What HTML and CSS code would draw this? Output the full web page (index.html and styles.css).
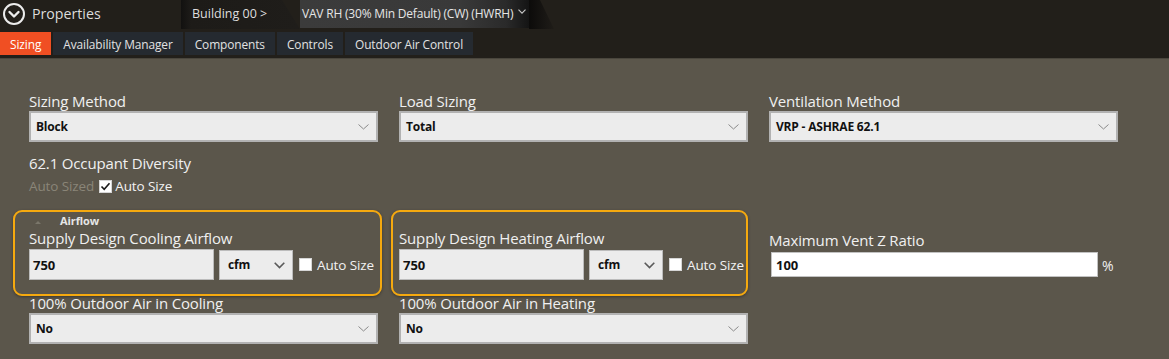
FILE: index.html
```html
<!DOCTYPE html>
<html lang="en">
<head>
<meta charset="utf-8">
<title>Properties</title>
<link rel="stylesheet" href="styles.css">
</head>
<body>
<div class="app">
  <header class="topbar">
    <div class="title">
      <svg class="title-icon" width="22" height="22" viewBox="0 0 22 22">
        <circle cx="11" cy="11" r="10" fill="none" stroke="#ececec" stroke-width="2"/>
        <path d="M6.5 9 L11 13.5 L15.5 9" fill="none" stroke="#ececec" stroke-width="2.4" stroke-linecap="round" stroke-linejoin="round"/>
      </svg>
      <span class="title-text">Properties</span>
    </div>
    <div class="crumb crumb-building">Building 00 &gt;</div>
    <div class="crumb crumb-item">
      <span class="crumb-text">VAV RH (30% Min Default) (CW) (HWRH)</span>
      <svg class="crumb-chevron" width="8" height="5" viewBox="0 0 8 5"><path d="M0.5 0.6 L4 4.2 L7.5 0.6" fill="none" stroke="#c8c8c8" stroke-width="1.1"/></svg>
    </div>
  </header>

  <nav class="tabs">
    <div class="tab tab-active">Sizing</div>
    <div class="tab">Availability Manager</div>
    <div class="tab">Components</div>
    <div class="tab">Controls</div>
    <div class="tab">Outdoor Air Control</div>
  </nav>

  <main class="content">
    <div class="row row-top">
      <div class="field">
        <div class="label">Sizing Method</div>
        <div class="select"><span class="value">Block</span><svg class="chev" width="11" height="6" viewBox="0 0 11 6"><path d="M0.5 0.5 L5.5 5 L10.5 0.5" fill="none" stroke="#8a8a8a" stroke-width="1"/></svg></div>
      </div>
      <div class="field">
        <div class="label">Load Sizing</div>
        <div class="select"><span class="value">Total</span><svg class="chev" width="11" height="6" viewBox="0 0 11 6"><path d="M0.5 0.5 L5.5 5 L10.5 0.5" fill="none" stroke="#8a8a8a" stroke-width="1"/></svg></div>
      </div>
      <div class="field">
        <div class="label">Ventilation Method</div>
        <div class="select"><span class="value">VRP - ASHRAE 62.1</span><svg class="chev" width="11" height="6" viewBox="0 0 11 6"><path d="M0.5 0.5 L5.5 5 L10.5 0.5" fill="none" stroke="#8a8a8a" stroke-width="1"/></svg></div>
      </div>
    </div>

    <div class="row row-diversity">
      <div class="field">
        <div class="label">62.1 Occupant Diversity</div>
        <div class="check-line">
          <span class="muted">Auto Sized</span>
          <span class="checkbox">
            <svg width="13" height="13" viewBox="0 0 13 13"><path d="M2.5 6.5 L5.2 9.3 L10.5 3.2" fill="none" stroke="#1a1a1a" stroke-width="1.6"/></svg>
          </span>
          <span class="check-text">Auto Size</span>
        </div>
      </div>
    </div>

    <div class="row row-airflow">
      <section class="group group-cooling">
        <div class="group-head"><span class="caret"></span><span class="group-title">Airflow</span></div>
        <div class="label">Supply Design Cooling Airflow</div>
        <div class="unit-line">
          <div class="input">750</div>
          <div class="select select-unit"><span class="value">cfm</span><svg class="chev" width="11" height="7" viewBox="0 0 11 7"><path d="M0.7 0.8 L5.5 5.6 L10.3 0.8" fill="none" stroke="#5a5a5a" stroke-width="1.6"/></svg></div>
          <span class="checkbox"></span>
          <span class="check-text">Auto Size</span>
        </div>
      </section>
      <section class="group group-heating">
        <div class="label">Supply Design Heating Airflow</div>
        <div class="unit-line">
          <div class="input">750</div>
          <div class="select select-unit"><span class="value">cfm</span><svg class="chev" width="11" height="7" viewBox="0 0 11 7"><path d="M0.7 0.8 L5.5 5.6 L10.3 0.8" fill="none" stroke="#5a5a5a" stroke-width="1.6"/></svg></div>
          <span class="checkbox"></span>
          <span class="check-text">Auto Size</span>
        </div>
      </section>
      <div class="field field-zratio">
        <div class="label">Maximum Vent Z Ratio</div>
        <div class="zratio-line">
          <div class="input input-white">100</div>
          <span class="percent">%</span>
        </div>
      </div>
    </div>

    <div class="row row-bottom">
      <div class="field">
        <div class="label">100% Outdoor Air in Cooling</div>
        <div class="select"><span class="value">No</span><svg class="chev" width="11" height="6" viewBox="0 0 11 6"><path d="M0.5 0.5 L5.5 5 L10.5 0.5" fill="none" stroke="#8a8a8a" stroke-width="1"/></svg></div>
      </div>
      <div class="field">
        <div class="label">100% Outdoor Air in Heating</div>
        <div class="select"><span class="value">No</span><svg class="chev" width="11" height="6" viewBox="0 0 11 6"><path d="M0.5 0.5 L5.5 5 L10.5 0.5" fill="none" stroke="#8a8a8a" stroke-width="1"/></svg></div>
      </div>
    </div>
  </main>
</div>
</body>
</html>
```

FILE: styles.css
```css
* { box-sizing: border-box; }

html, body {
  margin: 0;
  padding: 0;
}

body {
  width: 1169px;
  height: 359px;
  overflow: hidden;
  background: #5b564b;
  font-family: "Open Sans", "Noto Sans", sans-serif;
  color: #f2f2f2;
}

.app {
  display: flex;
  flex-direction: column;
  height: 359px;
}

/* ---------- top bar ---------- */
.topbar {
  height: 31px;
  background: #221f1a;
  display: flex;
  align-items: flex-start;
  flex-shrink: 0;
}

.title {
  width: 181px;
  height: 27px;
  display: flex;
  align-items: center;
  padding-left: 3px;
}

.title-icon {
  display: block;
  flex-shrink: 0;
}

.title-text {
  margin-left: 7px;
  font-size: 14.2px;
  color: #dcdcdc;
}

.crumb {
  height: 29px;
  display: flex;
  align-items: center;
  white-space: nowrap;
}

.crumb-building {
  width: 119px;
  padding-left: 11px;
  padding-bottom: 2px;
  font-size: 12.5px;
  color: #dedede;
  background: linear-gradient(to right, #121110 0px, #1d1b18 10px, #1f1d1a 100%);
  clip-path: polygon(0 0, 101px 0, 119px 100%, 0 100%);
}

.crumb-item {
  position: relative;
  width: 229px;
  height: 28px;
  padding-left: 2px;
  padding-bottom: 2px;
  font-size: 12px;
  color: #e6e6e6;
  background: linear-gradient(to right, #3b3b3b 0%, #393939 70%, #2a2a2a 90%, #141414 100%);
  letter-spacing: -0.2px;
}

.crumb-text {
  flex-shrink: 0;
}

.crumb-item::after {
  content: "";
  position: absolute;
  top: 0;
  left: 229px;
  width: 25px;
  height: 29px;
  background: linear-gradient(to right, #0c0b0a, #1f1c18);
  clip-path: polygon(0 0, 11px 0, 25px 100%, 0 100%);
}

.crumb-chevron {
  display: block;
  margin-left: 5px;
  margin-top: -4px;
  flex-shrink: 0;
}

/* ---------- tabs ---------- */
.tabs {
  height: 28px;
  background: #221f1a;
  display: flex;
  gap: 2px;
  padding-top: 1px;
  border-bottom: 1px solid #4a463d;
  flex-shrink: 0;
}

.tab {
  height: 23px;
  padding: 0 10px;
  background: #252a30;
  color: #e2e2e2;
  font-size: 11.9px;
  display: flex;
  align-items: center;
  letter-spacing: -0.1px;
}

.tab-active {
  background: #f04f23;
  color: #ffffff;
}

/* ---------- content ---------- */
.content {
  padding-top: 33px;
  display: flex;
  flex-direction: column;
}

.row {
  display: flex;
  align-items: flex-start;
}

.row-top,
.row-diversity,
.row-bottom {
  padding-left: 29px;
  gap: 21px;
}

.field {
  width: 349px;
  display: flex;
  flex-direction: column;
}

.label {
  height: 19px;
  line-height: 19px;
  font-size: 15px;
  color: #f0f0f0;
  white-space: nowrap;
  letter-spacing: -0.15px;
}

.select {
  height: 31px;
  background: #ececec;
  border: 2px solid #b2b2b2;
  display: flex;
  align-items: center;
  justify-content: space-between;
  padding: 0 7px 0 5px;
}

.value {
  font-size: 12px;
  font-weight: 700;
  color: #111111;
  letter-spacing: -0.2px;
}

.chev {
  display: block;
  margin-top: 1px;
}

.row-diversity {
  margin-top: 12px;
}

.check-line {
  height: 18px;
  margin-top: 4px;
  display: flex;
  align-items: center;
  font-size: 13.5px;
}

.muted {
  color: #8a8578;
  letter-spacing: -0.1px;
}

.checkbox {
  width: 13px;
  height: 13px;
  background: #ffffff;
  border: 1px solid #d6d6d6;
  display: inline-flex;
  flex-shrink: 0;
}

.checkbox svg {
  display: block;
  margin: -1px;
}

.check-line .checkbox {
  margin-left: 5px;
}

.check-text {
  margin-left: 3px;
  font-size: 13.5px;
  color: #f2f2f2;
  letter-spacing: -0.1px;
  white-space: nowrap;
}

/* ---------- airflow groups ---------- */
.row-airflow {
  margin-top: 15px;
  padding-left: 13px;
}

.group {
  height: 86px;
  border: 2px solid #f5a90f;
  border-radius: 9px;
  box-shadow: 0 1px 3px rgba(0, 0, 0, 0.35);
  display: flex;
  flex-direction: column;
}

.group-cooling {
  width: 369px;
  padding: 1px 0 0 14px;
}

.group-heating {
  width: 357px;
  margin-left: 9px;
  padding: 17px 0 0 6px;
}

.group-head {
  height: 14px;
  display: flex;
  align-items: center;
  margin-bottom: 2px;
}

.caret {
  width: 0;
  height: 0;
  margin-left: 6px;
  border-left: 3px solid transparent;
  border-right: 3px solid transparent;
  border-bottom: 3px solid #7a766a;
  margin-top: 4px;
}

.group-title {
  margin-left: 19px;
  font-size: 11px;
  font-weight: 700;
  color: #e6e6e6;
  letter-spacing: -0.1px;
}

.unit-line {
  margin-top: 1px;
  display: flex;
  align-items: center;
}

.input {
  width: 185px;
  height: 31px;
  background: #ececec;
  border: 1px solid #bcbcbc;
  display: flex;
  align-items: center;
  padding-left: 3px;
  font-size: 13px;
  font-weight: 700;
  color: #111111;
}

.select-unit {
  width: 74px;
  height: 30px;
  margin-left: 5px;
  border-width: 1px;
  border-color: #bcbcbc;
  padding: 0 7px 0 8px;
}

.unit-line .checkbox {
  margin-left: 6px;
}

.unit-line .check-text {
  margin-left: 5px;
}

.field-zratio {
  margin-left: 21px;
  padding-top: 21px;
}

.zratio-line {
  margin-top: 2px;
  display: flex;
  align-items: center;
}

.input-white {
  width: 327px;
  height: 25px;
  margin-left: 2px;
  background: #ffffff;
  border: 1px solid #c2c2c2;
  padding-left: 4px;
}

.percent {
  margin-left: 4px;
  margin-top: 2px;
  font-size: 14px;
  color: #f0f0f0;
}

/* ---------- bottom row ---------- */
.row-bottom {
  margin-top: -2px;
}
```
